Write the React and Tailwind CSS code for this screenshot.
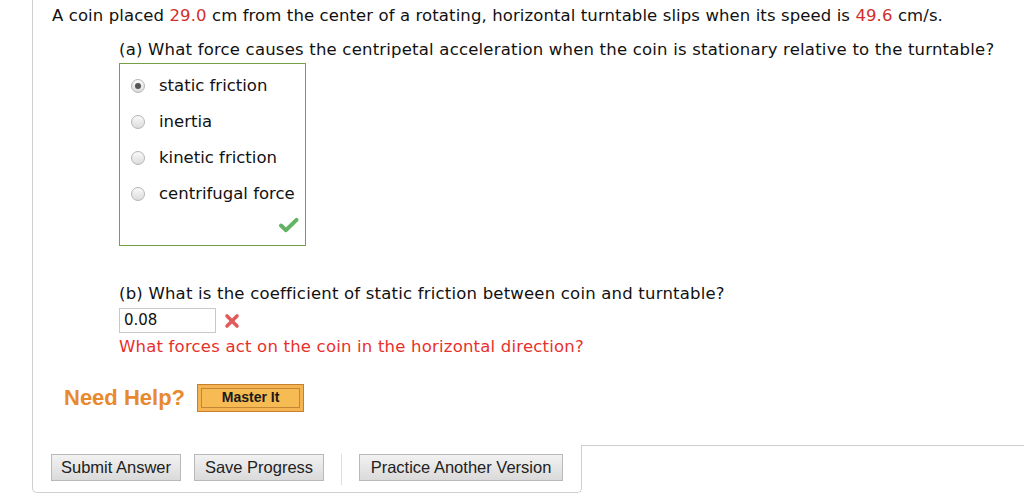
const options = ['static friction', 'inertia', 'kinetic friction', 'centrifugal force']

function Radio({ checked }) {
  return (
    <span className="w-[14px] h-[14px] rounded-full border border-[#b5b5b5] bg-gradient-to-b from-[#fafafa] to-[#dcdcdc] flex items-center justify-center shrink-0">
      {checked && <span className="w-[6px] h-[6px] rounded-full bg-[#555]" />}
    </span>
  )
}

function Check() {
  return (
    <svg width="20" height="16" viewBox="0 0 20 16">
      <path d="M2 8.5 L7 13.2 L17.5 2.8" fill="none" stroke="#64b264" strokeWidth="4" strokeLinecap="round" strokeLinejoin="round" />
    </svg>
  )
}

function Cross() {
  return (
    <svg width="16" height="16" viewBox="0 0 16 16">
      <path d="M3 3 L13 13 M13 3 L3 13" fill="none" stroke="#e25b5b" strokeWidth="3.6" strokeLinecap="round" />
    </svg>
  )
}

function GrayButton({ children, className }) {
  return (
    <button className={className + ' h-[27px] shrink-0 whitespace-nowrap border border-[#b9b9b9] bg-gradient-to-b from-[#f2f2f2] to-[#dadada] text-[16.5px] text-[#222] leading-none'} style={{ fontFamily: '"Liberation Sans", Arial, sans-serif' }}>
      {children}
    </button>
  )
}

export default function App() {
  return (
    <div className="w-[1024px] h-[497px] bg-white overflow-hidden pl-[32px] flex flex-col text-[#111]" style={{ fontFamily: '"DejaVu Sans", Verdana, sans-serif' }}>
      <div className="flex-1 border-l border-[#cfcfcf] pl-[19px]">
        <p className="mt-[6px] text-[16.5px] leading-[20px] tracking-[0.1px] whitespace-nowrap">
          A coin placed <span className="text-[#d0302c]">29.0</span> cm from the center of a rotating, horizontal turntable slips when its speed is <span className="text-[#d0302c]">49.6</span> cm/s.
        </p>

        <div className="ml-[67px]">
          <p className="mt-[14px] text-[16.5px] leading-[20px] tracking-[0.2px] whitespace-nowrap">
            (a) What force causes the centripetal acceleration when the coin is stationary relative to the turntable?
          </p>
          <div className="mt-[3px] w-[187px] h-[183px] border border-[#76a046] flex flex-col pl-[11px] pt-[12px]">
            {options.map((o, i) => (
              <div key={o} className="h-[36px] flex items-start gap-[14px]">
                <span className="mt-[3px]"><Radio checked={i === 0} /></span>
                <span className="text-[16.5px] leading-[20px] whitespace-nowrap">{o}</span>
              </div>
            ))}
            <div className="flex justify-end pr-[6px] -mt-[3px]">
              <Check />
            </div>
          </div>

          <p className="mt-[38px] text-[16.5px] leading-[20px] tracking-[0.2px] whitespace-nowrap">
            (b) What is the coefficient of static friction between coin and turntable?
          </p>
          <div className="mt-[4px] flex items-center gap-[8px]">
            <div className="w-[97px] h-[25px] border border-[#c8c8c8] pl-[4px] flex items-center text-[15px]">0.08</div>
            <Cross />
          </div>
          <p className="mt-[4px] text-[16.5px] leading-[20px] text-[#e8302b] tracking-[0.2px] whitespace-nowrap">
            What forces act on the coin in the horizontal direction?
          </p>
        </div>

        <div className="mt-[24px] ml-[12px] flex items-center gap-[12px]">
          <span className="text-[22px] font-bold text-[#e8892e]" style={{ fontFamily: '"Liberation Sans", Arial, sans-serif' }}>Need Help?</span>
          <div className="w-[107px] h-[28px] border border-[#c77f2c] bg-[#f3b451] p-[3px]">
            <div className="w-full h-full border border-[#c48535] bg-[#f6bb53] flex items-center justify-center text-[14px] font-bold text-[#1a1a1a]" style={{ fontFamily: '"Liberation Sans", Arial, sans-serif' }}>
              Master It
            </div>
          </div>
        </div>
      </div>

      <div className="h-[48px] flex mb-[4px]">
        <div className="border-l border-b border-r border-[#cfcfcf] rounded-b-[5px] pl-[18px] pr-[18px] pt-[9px] flex items-start">
          <GrayButton className="w-[130px]">Submit Answer</GrayButton>
          <GrayButton className="w-[130px] ml-[13px]">Save Progress</GrayButton>
          <span className="ml-[17px] w-px h-[31px] bg-[#dedede]" />
          <GrayButton className="w-[204px] ml-[17px]">Practice Another Version</GrayButton>
        </div>
        <div className="flex-1 border-t border-[#cfcfcf]" />
      </div>
    </div>
  )
}
